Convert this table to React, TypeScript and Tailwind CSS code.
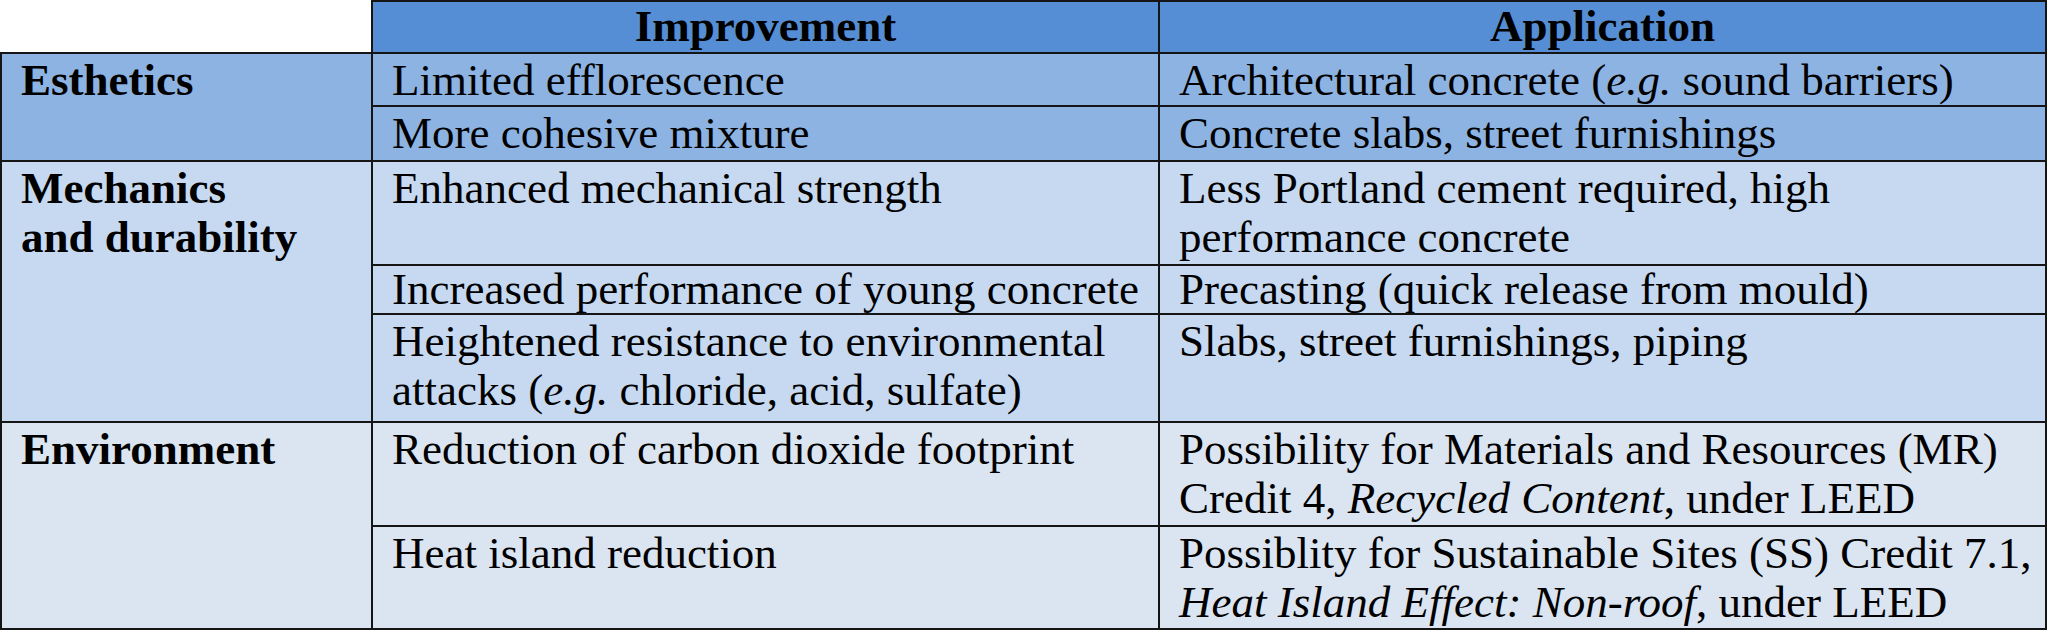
import React from "react";
import { clsx } from "clsx";

type Row = {
  improvement: React.ReactNode;
  application: React.ReactNode;
  tight?: boolean;
};

type Group = {
  label: React.ReactNode;
  bg: string;
  span: string;
  rows: Row[];
};

const groups: Group[] = [
  {
    label: "Esthetics",
    bg: "bg-[#8db3e2]",
    span: "row-span-2",
    rows: [
      {
        improvement: "Limited efflorescence",
        application: (
          <>
            Architectural concrete (<i>e.g.</i> sound barriers)
          </>
        ),
      },
      {
        improvement: "More cohesive mixture",
        application: "Concrete slabs, street furnishings",
      },
    ],
  },
  {
    label: (
      <>
        Mechanics
        <br />
        and durability
      </>
    ),
    bg: "bg-[#c6d9f1]",
    span: "row-span-3",
    rows: [
      {
        improvement: "Enhanced mechanical strength",
        application: (
          <>
            Less Portland cement required, high
            <br />
            performance concrete
          </>
        ),
      },
      {
        improvement: "Increased performance of young concrete",
        application: "Precasting (quick release from mould)",
        tight: true,
      },
      {
        improvement: (
          <>
            Heightened resistance to environmental
            <br />
            attacks (<i>e.g.</i> chloride, acid, sulfate)
          </>
        ),
        application: "Slabs, street furnishings, piping",
      },
    ],
  },
  {
    label: "Environment",
    bg: "bg-[#dbe5f1]",
    span: "row-span-2",
    rows: [
      {
        improvement: "Reduction of carbon dioxide footprint",
        application: (
          <>
            Possibility for Materials and Resources (MR)
            <br />
            Credit 4, <i>Recycled Content</i>, under LEED
          </>
        ),
      },
      {
        improvement: "Heat island reduction",
        application: (
          <>
            Possiblity for Sustainable Sites (SS) Credit 7.1,
            <br />
            <i>Heat Island Effect: Non-roof</i>, under LEED
          </>
        ),
      },
    ],
  },
];

const cell =
  "border-r-2 border-b-2 border-[#151515] px-[19px] whitespace-nowrap font-['Liberation_Serif']";

export default function App() {
  return (
    <div className="w-[2048px] h-[633px] bg-white overflow-hidden font-['Liberation_Serif'] text-black text-[45px] leading-[49px]">
      <div className="grid grid-cols-[373px_787px_887px] grid-rows-[54px_53px_55px_104px_49px_108px_104px_103px]">
        {/* header */}
        <div className="bg-white border-r-2 border-b-2 border-[#151515]" />
        <div className="bg-[#558ed5] border-t-2 border-r-2 border-b-2 border-[#151515] text-center font-bold font-['Liberation_Serif']">
          Improvement
        </div>
        <div className="bg-[#558ed5] border-t-2 border-r-2 border-b-2 border-[#151515] text-center font-bold font-['Liberation_Serif']">
          Application
        </div>

        {groups.map((g, gi) => (
          <React.Fragment key={gi}>
            {g.rows.map((r, ri) => (
              <React.Fragment key={ri}>
                {ri === 0 && (
                  <div className={clsx(cell, "pt-[2px]", g.bg, g.span, "border-l-2 font-bold")}>
                    {g.label}
                  </div>
                )}
                <div className={clsx(cell, g.bg, r.tight ? "pt-0 leading-[46px]" : "pt-[2px]")}>
                  {r.improvement}
                </div>
                <div className={clsx(cell, g.bg, r.tight ? "pt-0 leading-[46px]" : "pt-[2px]")}>
                  {r.application}
                </div>
              </React.Fragment>
            ))}
          </React.Fragment>
        ))}
      </div>
    </div>
  );
}
